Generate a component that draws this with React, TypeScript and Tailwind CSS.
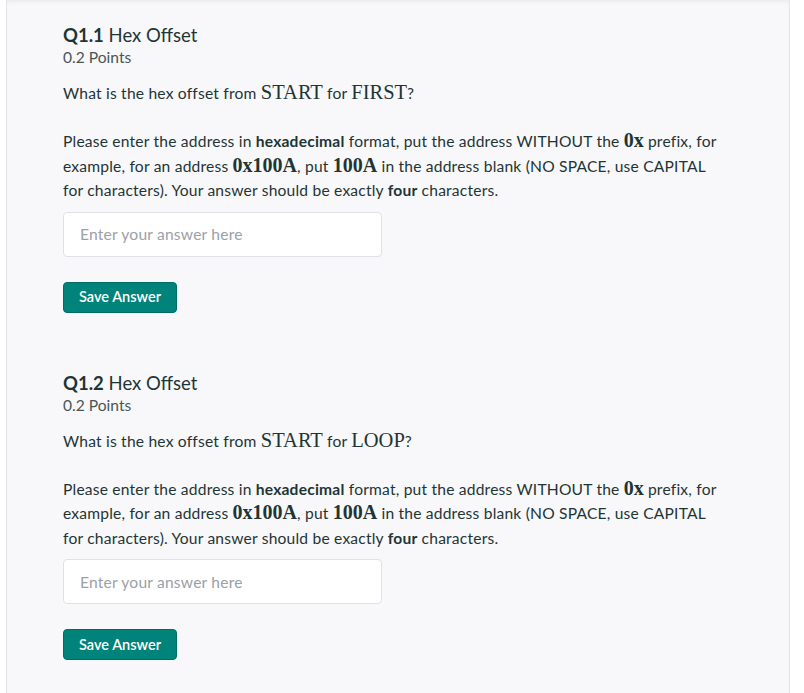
import React from 'react'

const sans = { fontFamily: 'Lato, "Open Sans", Arial, sans-serif' }

function M({ children, bold = false }: { children: React.ReactNode; bold?: boolean }) {
    return (
        <span
            className={`leading-none tracking-normal ${bold ? 'text-[20px] font-bold' : 'text-[20.5px] font-normal'}`}
            style={{ fontFamily: '"Liberation Serif", "DejaVu Serif", serif' }}
        >
            {children}
        </span>
    )
}

function Question({ num, target }: { num: string; target: string }) {
    return (
        <div>
            <h2 className="text-[18.5px] leading-6 text-[#1f3535]">
                <span className="font-bold">{num}</span> Hex Offset
            </h2>
            <div className="text-[15.6px] leading-5 text-[#4a5656]">0.2 Points</div>
            <p className="mt-[14px] text-[15.6px] leading-6 tracking-[0.2px] text-[#1f3535]">
                What is the hex offset from <M>START</M> for <M>{target}</M>?
            </p>
            <p className="mt-6 max-w-[656px] text-[15.6px] leading-[24.5px] tracking-[0.2px] text-[#1f3535]">
                Please enter the address in <b>hexadecimal</b> format, put the address WITHOUT the{' '}
                <M bold>0x</M> prefix, for example, for an address <M bold>0x100A</M>, put{' '}
                <M bold>100A</M> in the address blank (NO SPACE, use CAPITAL for characters). Your
                answer should be exactly <b>four</b> characters.
            </p>
            <input
                className="mt-[9px] block h-[45px] w-[319px] rounded-sm border border-[#dfe1e6] bg-white px-4 text-[15.6px] tracking-[0.2px] text-[#1f3535] outline-none placeholder:text-[#9aa1a8]"
                style={sans}
                placeholder="Enter your answer here"
            />
            <button className="mt-[25px] h-[31px] w-[114px] rounded-sm border border-[#006c64] bg-[#00837a] text-[14.5px] font-semibold text-white">
                Save Answer
            </button>
        </div>
    )
}

export default function App() {
    return (
        <div className="min-h-[693px] bg-white" style={sans}>
            <div className="ml-[6px] mr-[14px] min-h-[693px] border-x border-[#e3e5ea] bg-[#f8f8fa] px-[56px] pt-[23px] shadow-[inset_0_3px_4px_-2px_rgba(0,0,0,0.08)]">
                <div className="flex max-w-[672px] flex-col gap-[58px]">
                    <Question num="Q1.1" target="FIRST" />
                    <Question num="Q1.2" target="LOOP" />
                </div>
            </div>
        </div>
    )
}
